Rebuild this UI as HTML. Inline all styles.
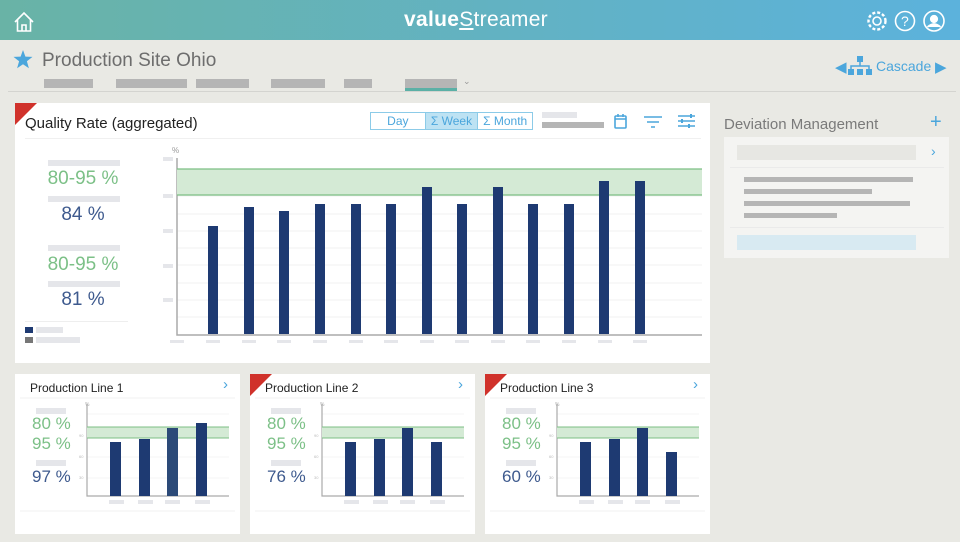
<!DOCTYPE html>
<html><head><meta charset="utf-8"><style>
*{margin:0;padding:0;box-sizing:border-box}
body{width:960px;height:542px;overflow:hidden;background:#e9e9e4;font-family:"Liberation Sans",sans-serif;position:relative}
.a{position:absolute}
.hdr{left:0;top:0;width:960px;height:40px;background:linear-gradient(90deg,#69b3a6,#5cb2dc)}
.card{background:#fff}
.g{background:#e5e6ea}
.gb{background:#b5b5b5}
.grn{color:#7cc087}
.blu{color:#3e5a8e}
</style></head><body>
<div class="a hdr"></div>
<svg class="a" style="left:13px;top:11px" width="22" height="22" viewBox="0 0 22 22" fill="none" stroke="#fff" stroke-width="1.6"><path d="M2 11 L11 2 L20 11 M4.5 9 V20 H17.5 V9 M9 20 V14 H13 V20"/></svg>
<div class="a" style="left:404px;top:8px;color:#fff;font-size:21px;letter-spacing:0.3px"><b style="font-weight:bold">value</b><span style="text-decoration:underline">S</span>treamer</div>
<svg class="a" style="left:866px;top:10px" width="80" height="22" viewBox="0 0 80 22" fill="none" stroke="#fff" stroke-width="1.6"><circle cx="11" cy="11" r="4"/><circle cx="11" cy="11" r="8.5" stroke-dasharray="3 2" stroke-width="2.4"/><circle cx="39" cy="11" r="9.5"/><text x="35" y="16" fill="#fff" stroke="none" font-size="14" font-family="Liberation Sans">?</text><circle cx="68" cy="11" r="10"/><circle cx="68" cy="9" r="3.3" fill="#fff"/><path d="M61.5 17 Q68 11 74.5 17" fill="#fff"/></svg>
<svg class="a" style="left:13px;top:50px" width="20" height="19" viewBox="0 0 20 19"><path d="M10 0 L12.4 6.6 L19.5 6.9 L13.9 11.3 L15.9 18.3 L10 14.3 L4.1 18.3 L6.1 11.3 L0.5 6.9 L7.6 6.6Z" fill="#4ba6dc"/></svg>
<div class="a" style="left:42px;top:50px;font-size:19px;color:#6d6d6d">Production Site Ohio</div>
<div class="a gb" style="left:44px;top:79px;width:49px;height:9px"></div>
<div class="a gb" style="left:116px;top:79px;width:71px;height:9px"></div>
<div class="a gb" style="left:196px;top:79px;width:53px;height:9px"></div>
<div class="a gb" style="left:271px;top:79px;width:54px;height:9px"></div>
<div class="a gb" style="left:344px;top:79px;width:28px;height:9px"></div>
<div class="a gb" style="left:405px;top:79px;width:52px;height:9px"></div>
<div class="a" style="left:405px;top:88px;width:52px;height:3px;background:#5bb0a6"></div>
<div class="a" style="left:463px;top:76px;font-size:9px;color:#999">⌄</div>
<div class="a" style="left:8px;top:91px;width:948px;height:1px;background:#d4d4d0"></div>
<div class="a" style="left:835px;top:58px;color:#4ba6dc;font-size:15px">◀</div>
<svg class="a" style="left:848px;top:56px" width="24" height="20" viewBox="0 0 24 20" fill="#4ba6dc"><rect x="9" y="0" width="6" height="6"/><rect x="0" y="13" width="6" height="6"/><rect x="9" y="13" width="6" height="6"/><rect x="18" y="13" width="6" height="6"/><path d="M12 6V10M3 13V10H21V13" stroke="#4ba6dc" stroke-width="1.5" fill="none"/></svg>
<div class="a" style="left:876px;top:58px;color:#4ba6dc;font-size:14px">Cascade</div>
<div class="a" style="left:935px;top:58px;color:#4ba6dc;font-size:15px">▶</div>

<div class="a card" style="left:15px;top:103px;width:695px;height:260px"></div>
<div class="a" style="left:15px;top:103px;width:0;height:0;border-top:22px solid #d0322b;border-right:22px solid transparent"></div>
<div class="a" style="left:25px;top:115px;font-size:15px;color:#222">Quality Rate (aggregated)</div>
<div class="a" style="left:25px;top:138px;width:676px;height:1px;background:#f0f0f0"></div>
<div class="a" style="left:370px;top:112px;width:163px;height:18px;border:1px solid #8ccbe8;font-size:12px;color:#4ba6dc;display:flex">
<div style="width:54px;text-align:center;line-height:16px">Day</div><div style="width:54px;text-align:center;line-height:16px;background:#bde2f3;border-left:1px solid #8ccbe8;border-right:1px solid #8ccbe8">Σ Week</div><div style="width:54px;text-align:center;line-height:16px">Σ Month</div></div>
<div class="a g" style="left:542px;top:112px;width:35px;height:6px"></div>
<div class="a gb" style="left:542px;top:122px;width:62px;height:6px"></div>
<svg class="a" style="left:613px;top:113px" width="85" height="16" viewBox="0 0 85 16" fill="none" stroke="#4ba6dc" stroke-width="1.6"><rect x="2" y="3" width="11" height="12" rx="1"/><path d="M2 6H13M5 1V4M10 1V4"/><path d="M31 4H49M34 9H46M38 14H42"/><path d="M65 3H82M65 8H82M65 13H82"/><path d="M78 1V5M69 6V10M76 11V15" stroke-width="2"/></svg>
<div class="a g" style="left:48px;top:160px;width:72px;height:6px"></div>
<div class="a grn" style="left:15px;top:168px;width:136px;text-align:center;font-size:19px">80-95 %</div>
<div class="a g" style="left:48px;top:196px;width:72px;height:6px"></div>
<div class="a blu" style="left:15px;top:204px;width:136px;text-align:center;font-size:19px">84 %</div>
<div class="a g" style="left:48px;top:245px;width:72px;height:6px"></div>
<div class="a grn" style="left:15px;top:254px;width:136px;text-align:center;font-size:19px">80-95 %</div>
<div class="a g" style="left:48px;top:281px;width:72px;height:6px"></div>
<div class="a blu" style="left:15px;top:289px;width:136px;text-align:center;font-size:19px">81 %</div>
<div class="a" style="left:25px;top:321px;width:103px;height:1px;background:#eee"></div>
<div class="a" style="left:25px;top:327px;width:8px;height:6px;background:#1e3a72"></div>
<div class="a g" style="left:36px;top:327px;width:27px;height:6px"></div>
<div class="a" style="left:25px;top:337px;width:8px;height:6px;background:#777"></div>
<div class="a g" style="left:36px;top:337px;width:44px;height:6px"></div>
<div class="a" style="left:172px;top:146px;font-size:8px;color:#999">%</div>
<svg class="a" style="left:160px;top:155px" width="545" height="195">
<g stroke="#f2f2f2"><path d="M17 41H542M17 76H542M17 110H542M17 145H542M17 162H542M17 24H542M17 59H542M17 93H542M17 128H542"/></g>
<g fill="#e5e6ea"><rect x="3" y="2" width="10" height="4"/><rect x="3" y="39" width="10" height="4"/><rect x="3" y="74" width="10" height="4"/><rect x="3" y="109" width="10" height="4"/><rect x="3" y="143" width="10" height="4"/></g>
<path d="M17 3V180H542" stroke="#aaa" stroke-width="1.5" fill="none"/>
<rect x="17" y="14" width="525" height="26" fill="#d4ead5"/>
<path d="M17 14H542M17 40H542" stroke="#7cbf84" stroke-width="1.3"/>
<g fill="#e5e6ea"><rect x="10" y="185" width="14" height="3"/><rect x="46" y="185" width="14" height="3"/><rect x="82" y="185" width="14" height="3"/><rect x="117" y="185" width="14" height="3"/><rect x="153" y="185" width="14" height="3"/><rect x="189" y="185" width="14" height="3"/><rect x="224" y="185" width="14" height="3"/><rect x="260" y="185" width="14" height="3"/><rect x="295" y="185" width="14" height="3"/><rect x="331" y="185" width="14" height="3"/><rect x="366" y="185" width="14" height="3"/><rect x="402" y="185" width="14" height="3"/><rect x="438" y="185" width="14" height="3"/><rect x="473" y="185" width="14" height="3"/></g>
<g fill="#1e3a72">
<rect x="48" y="71" width="10" height="108"/><rect x="84" y="52" width="10" height="127"/><rect x="119" y="56" width="10" height="123"/><rect x="155" y="49" width="10" height="130"/><rect x="191" y="49" width="10" height="130"/><rect x="226" y="49" width="10" height="130"/><rect x="262" y="32" width="10" height="147"/><rect x="297" y="49" width="10" height="130"/><rect x="333" y="32" width="10" height="147"/><rect x="368" y="49" width="10" height="130"/><rect x="404" y="49" width="10" height="130"/><rect x="439" y="26" width="10" height="153"/><rect x="475" y="26" width="10" height="153"/></g>
</svg>

<div class="a" style="left:724px;top:116px;font-size:15px;color:#7a7a7a">Deviation Management</div>
<div class="a" style="left:930px;top:111px;font-size:20px;color:#4ba6dc">+</div>
<div class="a" style="left:724px;top:137px;width:225px;height:121px;background:#f4f4f2"></div>
<div class="a" style="left:737px;top:145px;width:179px;height:15px;background:#e7e7e3"></div>
<div class="a" style="left:931px;top:143px;font-size:14px;color:#4ba6dc">›</div>
<div class="a" style="left:730px;top:167px;width:214px;height:1px;background:#eaeaea"></div>
<div class="a gb" style="left:744px;top:177px;width:169px;height:5px"></div>
<div class="a gb" style="left:744px;top:189px;width:128px;height:5px"></div>
<div class="a gb" style="left:744px;top:201px;width:166px;height:5px"></div>
<div class="a gb" style="left:744px;top:213px;width:93px;height:5px"></div>
<div class="a" style="left:730px;top:227px;width:214px;height:1px;background:#eaeaea"></div>
<div class="a" style="left:737px;top:235px;width:179px;height:15px;background:#d8eaf2"></div>

<div class="a card" style="left:15px;top:374px;width:225px;height:160px"></div>
<div class="a card" style="left:250px;top:374px;width:225px;height:160px"></div>
<div class="a card" style="left:485px;top:374px;width:225px;height:160px"></div>
<div class="a" style="left:250px;top:374px;border-top:22px solid #d0322b;border-right:22px solid transparent"></div>
<div class="a" style="left:485px;top:374px;border-top:22px solid #d0322b;border-right:22px solid transparent"></div>

<div class="a" style="left:30px;top:381px;font-size:12px;color:#222">Production Line 1</div>
<div class="a" style="left:265px;top:381px;font-size:12px;color:#222">Production Line 2</div>
<div class="a" style="left:500px;top:381px;font-size:12px;color:#222">Production Line 3</div>
<div class="a" style="left:223px;top:376px;font-size:15px;color:#4ba6dc">›</div>
<div class="a" style="left:458px;top:376px;font-size:15px;color:#4ba6dc">›</div>
<div class="a" style="left:693px;top:376px;font-size:15px;color:#4ba6dc">›</div>

<svg class="a" style="left:15px;top:374px" width="695" height="160">
<defs><g id="c">
<path d="M5 24H220M5 137H220" stroke="#f0f0f0"/>
<rect x="21" y="34" width="30" height="6" fill="#e5e6ea"/><rect x="21" y="86" width="30" height="6" fill="#e5e6ea"/>
<text x="70" y="32" font-size="5" fill="#aaa" font-family="Liberation Sans">%</text>
<text x="64" y="63" font-size="4" fill="#bbb" font-family="Liberation Sans">90</text><text x="64" y="84" font-size="4" fill="#bbb" font-family="Liberation Sans">60</text><text x="64" y="105" font-size="4" fill="#bbb" font-family="Liberation Sans">30</text>
<path d="M72 40H214M72 62H214M72 83H214M72 104H214" stroke="#f4f4f4"/>
<path d="M72 30V122H214" stroke="#aaa" stroke-width="1.2" fill="none"/>
<rect x="72" y="53" width="142" height="11" fill="#d4ead5"/><path d="M72 53H214M72 64H214" stroke="#7cbf84"/>
<g fill="#e5e6ea"><rect x="94" y="126" width="15" height="4"/><rect x="123" y="126" width="15" height="4"/><rect x="150" y="126" width="15" height="4"/><rect x="180" y="126" width="15" height="4"/></g>
</g></defs>
<use href="#c"/><use href="#c" x="235"/><use href="#c" x="470"/>
<g fill="#1e3a72"><rect x="95" y="68" width="11" height="54"/><rect x="124" y="65" width="11" height="57"/><rect x="152" y="54" width="11" height="68" fill="#2c4a78"/><rect x="181" y="49" width="11" height="73"/>
<rect x="330" y="68" width="11" height="54"/><rect x="359" y="65" width="11" height="57"/><rect x="387" y="54" width="11" height="68"/><rect x="416" y="68" width="11" height="54"/>
<rect x="565" y="68" width="11" height="54"/><rect x="594" y="65" width="11" height="57"/><rect x="622" y="54" width="11" height="68"/><rect x="651" y="78" width="11" height="44"/></g>
</svg>
<div class="a grn" style="left:32px;top:414px;font-size:17px;line-height:20px">80 %<br>95 %</div>
<div class="a blu" style="left:32px;top:467px;font-size:17px">97 %</div>
<div class="a grn" style="left:267px;top:414px;font-size:17px;line-height:20px">80 %<br>95 %</div>
<div class="a blu" style="left:267px;top:467px;font-size:17px">76 %</div>
<div class="a grn" style="left:502px;top:414px;font-size:17px;line-height:20px">80 %<br>95 %</div>
<div class="a blu" style="left:502px;top:467px;font-size:17px">60 %</div>
</body></html>
